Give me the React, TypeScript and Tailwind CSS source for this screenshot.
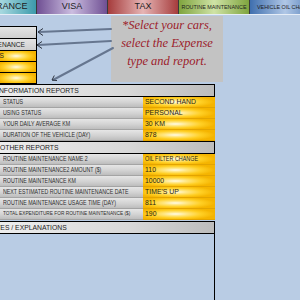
import React from "react";

const yellow =
  "bg-[radial-gradient(ellipse_55%_60%_at_45%_50%,#fffbe8_0%,#ffe680_30%,#ffcf24_65%,#f5b400_100%)]";
const labelBg =
  "bg-[linear-gradient(to_bottom,#e6e6e6,#d2d2d2_55%,#bdbdbd)]";
const headerBg =
  "bg-[linear-gradient(to_right,#ededed,#d8d8d8_60%,#bcbcbc)]";

const info = [
  ["STATUS", "SECOND HAND"],
  ["USING STATUS", "PERSONAL"],
  ["YOUR DAILY AVERAGE KM", "30 KM"],
  ["DURATION OF THE VEHICLE (DAY)", "878"],
];

const other: [string, string, boolean, boolean][] = [
  ["ROUTINE MAINTENANCE NAME 2", "OIL FILTER CHANGE", false, true],
  ["ROUTINE MAINTENANCE2 AMOUNT ($)", "110", false, false],
  ["ROUTINE MAINTENANCE KM", "10000", false, false],
  ["NEXT ESTIMATED ROUTINE MAINTENANCE DATE", "TIME'S UP", false, false],
  ["ROUTINE MAINTENANCE USAGE TIME (DAY)", "811", false, false],
  ["TOTAL EXPENDITURE FOR ROUTINE MAINTENANCE ($)", "190", true, false],
];

function Row({
  label,
  value,
  smallLabel,
  smallValue,
}: {
  label: string;
  value: string;
  smallLabel?: boolean;
  smallValue?: boolean;
}) {
  return (
    <div className="flex h-[11px]">
      <div
        className={`w-[143px] ${labelBg} border-b border-[#a4a4a4] flex items-center pl-[3px] whitespace-nowrap overflow-hidden text-[#2e2e2e]`}
      >
        {smallLabel ? (
          <span className="inline-block origin-left scale-x-[0.9] text-[5.3px]">
            {label}
          </span>
        ) : (
          <span className="inline-block origin-left scale-x-[0.8] text-[6.6px]">
            {label}
          </span>
        )}
      </div>
      <div
        className={`w-[72px] ${yellow} border-b border-[#e3a400] flex items-center pl-[2px] whitespace-nowrap overflow-hidden text-[#2a2410]`}
      >
        {smallValue ? (
          <span className="inline-block origin-left scale-x-[0.85] text-[6.4px]">
            {value}
          </span>
        ) : (
          <span className="inline-block origin-left scale-x-[0.92] text-[7.5px]">
            {value}
          </span>
        )}
      </div>
    </div>
  );
}

function Header({ text, shift }: { text: string; shift: string }) {
  return (
    <div
      className={`h-[13px] w-[215px] ${headerBg} border-y border-r border-black flex items-center whitespace-nowrap overflow-hidden text-[8px] text-[#1e1e1e]`}
    >
      <span className={`inline-block origin-left scale-x-[0.85] ${shift}`}>
        {text}
      </span>
    </div>
  );
}

export default function App() {
  return (
    <div className="relative w-[300px] h-[300px] overflow-hidden bg-[#b9cce4] font-['Liberation_Sans',Arial,sans-serif]">
      {/* tabs */}
      <div className="flex h-[14px] -ml-[34px] text-[#1d1d1d]">
        <div className="w-[71px] shrink-0 border-r border-[#3a3a3a] flex items-center justify-center text-[9px] bg-[linear-gradient(to_right,#3c9aab,#a6d8df_50%,#3c9aab)]">
          INSURANCE
        </div>
        <div className="w-[71px] shrink-0 border-r border-[#3a3a3a] flex items-center justify-center text-[9px] bg-[linear-gradient(to_right,#6f4f93,#cbbde0_50%,#6f4f93)]">
          VISA
        </div>
        <div className="w-[71px] shrink-0 border-r border-[#3a3a3a] flex items-center justify-center text-[9px] bg-[linear-gradient(to_right,#a63c3c,#e6b5b5_50%,#a63c3c)]">
          TAX
        </div>
        <div className="w-[71px] shrink-0 border-r border-[#3a3a3a] flex items-center justify-center text-[5.4px] bg-[linear-gradient(to_right,#7fa43e,#cfe3a6_50%,#7fa43e)]">
          ROUTINE MAINTENANCE
        </div>
        <div className="w-[71px] shrink-0 border-r border-[#3a3a3a] flex items-center pl-[7px] whitespace-nowrap text-[5.4px] bg-[linear-gradient(to_right,#3f6fae,#b0c7e6_50%,#3f6fae)]">
          VEHICLE OIL CHANGE
        </div>
      </div>
      <div className="h-px bg-[#e6edf6]" />

      {/* upper area */}
      <div className="flex items-start h-[69px]">
        <div className="mt-[11px] w-[37px] shrink-0 border-t border-r border-black text-[6.6px] text-[#222]">
          <div className="h-[12px] border-b border-black bg-[linear-gradient(to_bottom,#e4e4e4,#cfcfcf)]" />
          <div className="h-[12px] border-b border-black bg-[linear-gradient(to_bottom,#e4e4e4,#cfcfcf)] flex items-center justify-end pr-[11px] whitespace-nowrap overflow-hidden">
            MAINTENANCE
          </div>
          <div className={`h-[11px] border-b border-black ${yellow} flex items-center justify-end pr-[32px] overflow-hidden`}>
            S
          </div>
          <div className={`h-[11px] border-b border-black ${yellow}`} />
          <div className={`h-[11px] border-b border-black ${yellow}`} />
        </div>
        <div className="ml-[74px] mt-[1px] w-[112px] h-[66px] shrink-0 bg-[#c3c3c3] flex flex-col items-center justify-start font-['Liberation_Serif',serif] italic text-[12.5px] leading-[18px] text-[#9c1c2b]">
          <span>*Select your cars,</span>
          <span>select the Expense</span>
          <span>type and report.</span>
        </div>
      </div>

      {/* main table */}
      <div>
        <Header text="INFORMATION REPORTS" shift="-ml-[3px]" />
        {info.map(([l, v]) => (
          <Row key={l} label={l} value={v} />
        ))}
        <Header text="OTHER REPORTS" shift="ml-0" />
        {other.map(([l, v, s, sv]) => (
          <Row key={l} label={l} value={v} smallLabel={s} smallValue={sv} />
        ))}
        <div className="h-px" />
        <Header text="NOTES / EXPLANATIONS" shift="-ml-[14px]" />
        <div className="w-[215px] h-[70px] border-r border-black" />
      </div>

      {/* arrows */}
      <svg
        className="absolute left-0 top-0 pointer-events-none"
        width="300"
        height="300"
        viewBox="0 0 300 300"
      >
        <g stroke="#66768f" strokeWidth="2" strokeLinecap="round" fill="none">
          <line x1="111" y1="29" x2="39" y2="32" />
          <line x1="111" y1="41" x2="38" y2="45" />
          <line x1="113" y1="48" x2="53" y2="80" />
        </g>
        <g stroke="#2e3440" strokeWidth="1" fill="none">
          <polyline points="43,28.5 38,32 43,35.5" />
          <polyline points="42,41.5 37,45 42,48.5" />
          <polyline points="57,80.6 52,80 54.3,75.5" />
        </g>
      </svg>
    </div>
  );
}
